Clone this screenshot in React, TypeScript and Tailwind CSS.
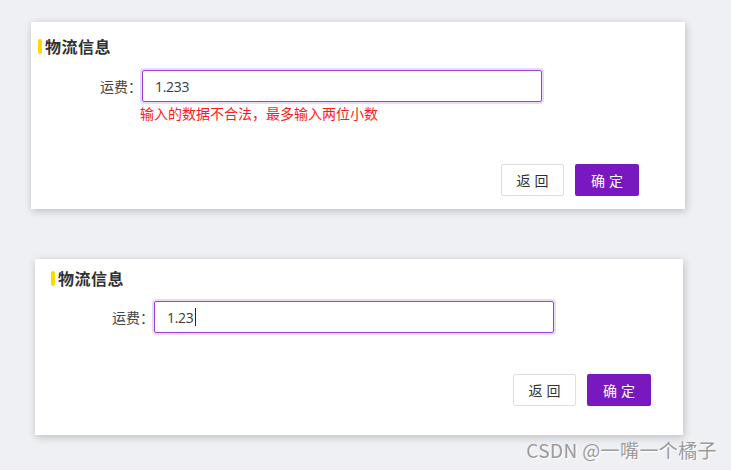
import React from "react";

const cjk = { fontFamily: '"Noto Sans CJK SC", "Noto Sans", sans-serif' };

function Card({
  outer,
  barCls,
  rowCls,
  labelCls,
  value,
  caret,
  error,
  footerCls,
}: {
  outer: string;
  barCls: string;
  rowCls: string;
  labelCls: string;
  value: string;
  caret?: boolean;
  error?: boolean;
  footerCls: string;
}) {
  return (
    <div className={`bg-white shadow-[1px_2px_8px_rgba(0,0,0,0.22)] flex flex-col ${outer}`}>
      <div className={`flex items-center ${barCls}`}>
        <div className="w-[4px] h-[15px] rounded-[2px] bg-[#ffd800]" />
        <div className="ml-[3px] text-[16px] leading-[20px] font-bold text-[#303133] tracking-[0.5px]">物流信息</div>
      </div>
      <div className={`flex items-center ${rowCls}`}>
        <div className={`text-[14px] leading-[20px] text-[#454545] ${labelCls}`}>运费：</div>
        <div
          className="h-[32px] w-[400px] rounded-[2px] border border-[#9b42d6] ring-2 ring-[#9b42d6]/20 flex items-center pl-[12px] text-[14px] text-[#3a3a3a]"
          style={{ fontFamily: '"Open Sans", "Noto Sans", sans-serif' }}
        >
          <span className="tracking-[-0.3px]">{value}</span>
          {caret && <span className="ml-[1px] inline-block w-[1px] h-[18px] bg-[#222]" />}
        </div>
      </div>
      {error && (
        <div className="ml-[109px] mt-[3px] text-[14px] leading-[16px] text-[#ff1a1a]">
          输入的数据不合法，最多输入两位小数
        </div>
      )}
      <div className={`flex justify-end gap-[11px] ${footerCls}`}>
        <div className="w-[63px] h-[32px] border border-[#dcdfe6] rounded-[2px] bg-white flex items-center justify-center text-[14px] text-[#303133] tracking-[4px] pl-[4px]">
          返回
        </div>
        <div className="w-[64px] h-[32px] rounded-[2px] bg-[#7818be] flex items-center justify-center text-[14px] text-white tracking-[4px] pl-[4px]">
          确定
        </div>
      </div>
    </div>
  );
}

export default function App() {
  return (
    <div className="w-[731px] h-[470px] bg-[#eff0f4] overflow-hidden flex flex-col" style={cjk}>
      <Card
        outer="ml-[31px] mt-[22px] w-[654px] h-[187px]"
        barCls="ml-[7px] mt-[14px]"
        rowCls="mt-[14px]"
        labelCls="ml-[69px] w-[42px]"
        value="1.233"
        error
        footerCls="mt-[43px] pr-[46px]"
      />
      <Card
        outer="ml-[35px] mt-[50px] w-[648px] h-[176px]"
        barCls="ml-[16px] mt-[9px]"
        rowCls="mt-[13px]"
        labelCls="ml-[77px] w-[42px]"
        value="1.23"
        caret
        footerCls="mt-[41px] pr-[32px]"
      />
      <div className="flex justify-end pr-[14px] mt-[3px]">
        <div className="text-[19px] leading-[24px] tracking-[0.4px] text-[#9a9a9a] [text-shadow:1px_1px_0_#fff]">
          CSDN @一嘴一个橘子
        </div>
      </div>
    </div>
  );
}
